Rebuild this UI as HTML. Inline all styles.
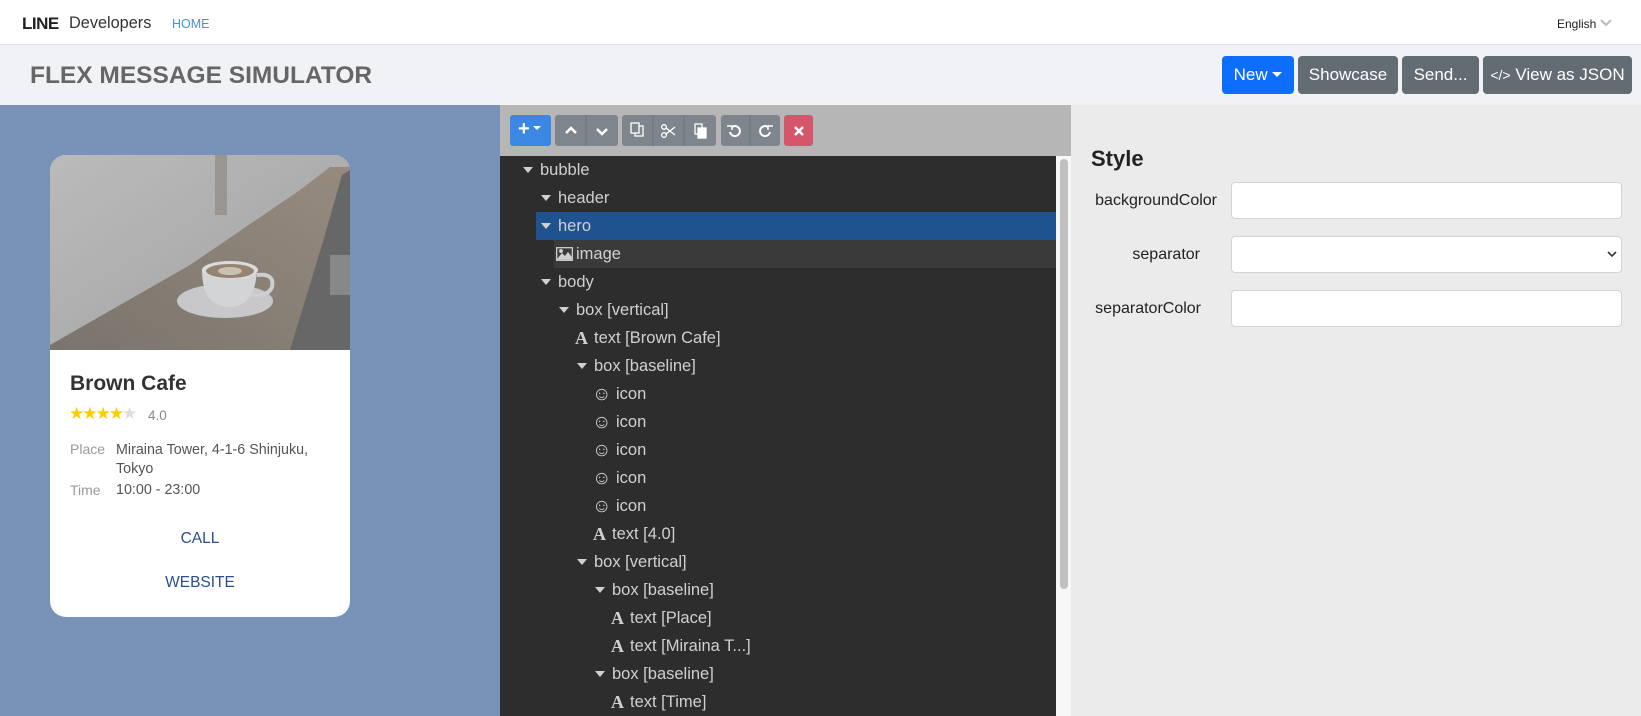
<!DOCTYPE html>
<html><head><meta charset="utf-8"><style>
*{box-sizing:border-box;margin:0;padding:0}
body{width:1641px;height:716px;overflow:hidden;font-family:"Liberation Sans",sans-serif;background:#fff;position:relative}
.abs{position:absolute}
#hdr{left:0;top:0;width:1641px;height:45px;background:#fff;border-bottom:1px solid #dde1e6}
#bar{left:0;top:45px;width:1641px;height:60px;background:#f1f2f6}
.btn{position:absolute;top:56px;height:38px;border-radius:4px;color:#fff;font-size:17px;line-height:38px;text-align:center;background:#636b73}
#left{left:0;top:105px;width:500px;height:611px;background:#7893b7}
#mid{left:500px;top:105px;width:571px;height:611px;background:#2d2d2d}
#tb{left:500px;top:105px;width:571px;height:51px;background:#b6b6b6}
#right{left:1071px;top:105px;width:570px;height:611px;background:#ebebeb}
.tbb{position:absolute;top:115px;height:31px;background:#7f858c;border-radius:3px}
.row{position:absolute;height:28px;line-height:28px;font-size:16.5px;color:#d0d0d0;white-space:nowrap}
.sm{font-size:19px;vertical-align:-1px}
.tri{position:absolute;width:0;height:0;border-left:5px solid transparent;border-right:5px solid transparent;border-top:6px solid #d0d0d0}
.A{position:absolute;font-family:"Liberation Serif",serif;font-weight:bold;font-size:18px;color:#d0d0d0}
.lbl{position:absolute;font-size:16px;color:#222;text-align:right}
.inp{position:absolute;left:1231px;width:391px;height:37px;background:#fff;border:1px solid #cfd4da;border-radius:4px}
</style></head><body>
<div id="hdr" class="abs"></div>
<div class="abs" style="left:22px;top:14px;font-size:17px;font-weight:bold;color:#222;letter-spacing:-0.5px">LINE</div>
<div class="abs" style="left:69px;top:14px;font-size:16.3px;color:#333">Developers</div>
<div class="abs" style="left:172px;top:17px;font-size:12.5px;color:#3d97d6">HOME</div>
<div class="abs" style="left:1557px;top:17px;font-size:12px;color:#222">English</div>
<svg class="abs" style="left:1600px;top:19px" width="12" height="8"><path d="M1 1 L6 6 L11 1" stroke="#bbb" stroke-width="2" fill="none"/></svg>
<div id="bar" class="abs"></div>
<div class="abs" style="left:30px;top:62px;font-size:24.5px;font-weight:bold;color:#666">FLEX MESSAGE SIMULATOR</div>
<div class="btn" style="left:1222px;width:72px;background:#0d6efd">New <span style="display:inline-block;border-left:5px solid transparent;border-right:5px solid transparent;border-top:5px solid #fff;vertical-align:3px"></span></div>
<div class="btn" style="left:1298px;width:100px">Showcase</div>
<div class="btn" style="left:1402px;width:77px">Send...</div>
<div class="btn" style="left:1483px;width:149px"><span style="font-size:14px">&lt;/&gt;</span> View as JSON</div>

<div id="left" class="abs"></div>
<div class="abs" style="left:50px;top:155px;width:300px;height:462px;background:#fff;border-radius:16px;overflow:hidden">
<svg width="300" height="195" viewBox="0 0 300 195">
<defs><linearGradient id="w" x1="0" y1="0" x2="1" y2="1"><stop offset="0" stop-color="#b8b8b8"/><stop offset="1" stop-color="#9a9a9a"/></linearGradient>
<linearGradient id="t" x1="0" y1="1" x2="1" y2="0"><stop offset="0" stop-color="#6a6259"/><stop offset="1" stop-color="#8c7e6e"/></linearGradient></defs>
<rect width="300" height="195" fill="url(#w)"/>
<rect x="165" y="0" width="12" height="60" fill="#8f8b85"/>
<polygon points="0,195 0,190 140,110 250,35 280,12 300,12 300,195" fill="url(#t)"/>
<polygon points="240,195 272,90 292,20 300,15 300,195" fill="#525254"/>
<rect x="280" y="100" width="20" height="40" fill="#7a7a7a"/>
<ellipse cx="175" cy="146" rx="48" ry="17" fill="#c8c9cc"/>
<path d="M152 115 Q152 152 180 152 Q205 152 207 115 Z" fill="#d6d7da"/>
<path d="M207 120 Q225 118 222 132 Q218 142 200 140" stroke="#cfd0d3" stroke-width="4" fill="none"/>
<ellipse cx="180" cy="115" rx="28" ry="9" fill="#e0e0e2"/>
<ellipse cx="180" cy="116" rx="24" ry="7" fill="#8b7660"/>
<ellipse cx="180" cy="116" rx="12" ry="4" fill="#cdbfae"/>
<rect width="300" height="195" fill="#c8c8c8" opacity="0.18"/>
</svg>
<div class="abs" style="left:20px;top:217px;font-size:21px;font-weight:bold;color:#333">Brown Cafe</div>
<div class="abs" style="left:19px;top:249px;font-size:17px;color:#fc0;letter-spacing:-2px">★★★★<span style="color:#ddd">★</span></div>
<div class="abs" style="left:98px;top:253px;font-size:13.5px;color:#888">4.0</div>
<div class="abs" style="left:20px;top:286px;font-size:14px;color:#999">Place</div>
<div class="abs" style="left:66px;top:286px;font-size:14.3px;color:#555;line-height:19px;width:230px">Miraina Tower, 4-1-6 Shinjuku, Tokyo</div>
<div class="abs" style="left:20px;top:327px;font-size:14px;color:#999">Time</div>
<div class="abs" style="left:66px;top:327px;font-size:14.3px;color:#555">10:00 - 23:00</div>
<div class="abs" style="left:0;width:300px;top:375px;text-align:center;font-size:15.5px;color:#2a4e8f">CALL</div>
<div class="abs" style="left:0;width:300px;top:419px;text-align:center;font-size:15.5px;color:#2a4e8f">WEBSITE</div>
</div>

<div id="mid" class="abs"></div>
<div id="tb" class="abs"></div>
<div class="tbb" style="left:510px;width:41px;background:#3a87e4;color:#fff;font-weight:bold;font-size:20px;line-height:29px;padding-left:8px">+<span style="display:inline-block;border-left:4px solid transparent;border-right:4px solid transparent;border-top:4px solid #fff;vertical-align:5px;margin-left:3px"></span></div>
<div class="tbb" style="left:555px;width:63px"></div>
<div class="tbb" style="left:622px;width:94px"></div>
<div class="tbb" style="left:721px;width:59px"></div>
<div class="tbb" style="left:784px;width:29px;background:#d5566a"></div>
<svg class="abs" style="left:500px;top:115px" width="320" height="31" fill="none" stroke="#fff" stroke-width="2.5">
<line x1="86" y1="0" x2="86" y2="31" stroke="#6e747a" stroke-width="1"/>
<line x1="153" y1="0" x2="153" y2="31" stroke="#6e747a" stroke-width="1"/>
<line x1="184" y1="0" x2="184" y2="31" stroke="#6e747a" stroke-width="1"/>
<line x1="250" y1="0" x2="250" y2="31" stroke="#6e747a" stroke-width="1"/>
<path d="M66 18 L71 13 L76 18"/><path d="M97 14 L102 19 L107 14"/>
<g stroke-width="1.3"><rect x="135" y="11" width="8" height="10"/><rect x="131" y="8" width="8" height="10" fill="#7f858c"/>
<circle cx="164" cy="12" r="2.3"/><circle cx="164" cy="20" r="2.3"/><path d="M166 13 L175 20 M166 19 L175 12"/>
<rect x="195" y="9" width="7" height="10"/><rect x="198" y="13" width="8" height="10" fill="#fff"/></g>
<path d="M232 12 A5 5 0 1 1 230 17" stroke-width="2"/><path d="M227 11 L232 11 L232 15" stroke-width="1.5"/>
<path d="M268 12 A5 5 0 1 0 270 17" stroke-width="2"/><path d="M273 11 L268 11 L268 15" stroke-width="1.5"/>
<path d="M295 12 L303 20 M303 12 L295 20"/>
</svg>
<div class="abs" style="left:536px;top:212px;width:520px;height:28px;background:#1f538f"></div>
<div class="abs" style="left:554px;top:240px;width:502px;height:28px;background:#3a3a3a"></div>
<div class="abs" style="left:1056px;top:156px;width:15px;height:560px;background:#f7f7f7"></div>
<div class="abs" style="left:1060px;top:159px;width:8px;height:430px;background:#c0c0c0;border-radius:4px"></div>

<div class="tri" style="left:523px;top:167px"></div><div class="row" style="left:540px;top:156px">bubble</div>
<div class="tri" style="left:541px;top:195px"></div><div class="row" style="left:558px;top:184px">header</div>
<div class="tri" style="left:541px;top:223px"></div><div class="row" style="left:558px;top:212px">hero</div>
<svg class="abs" style="left:556px;top:247px" width="17" height="14" fill="none" stroke="#d0d0d0" stroke-width="1.3"><rect x="0.7" y="0.7" width="15.6" height="12.6"/><path d="M2 12 L6 7 L9 10 L12 6 L15 10 L15 12 Z" fill="#d0d0d0"/><circle cx="5" cy="4" r="1.3" fill="#d0d0d0"/></svg>
<div class="row" style="left:576px;top:240px">image</div>
<div class="tri" style="left:541px;top:279px"></div><div class="row" style="left:558px;top:268px">body</div>
<div class="tri" style="left:559px;top:307px"></div><div class="row" style="left:576px;top:296px">box [vertical]</div>
<div class="A" style="left:575px;top:328px">A</div><div class="row" style="left:594px;top:324px">text [Brown Cafe]</div>
<div class="tri" style="left:577px;top:363px"></div><div class="row" style="left:594px;top:352px">box [baseline]</div>
<div class="row" style="left:592px;top:380px"><span class="sm">☺</span> icon</div>
<div class="row" style="left:592px;top:408px"><span class="sm">☺</span> icon</div>
<div class="row" style="left:592px;top:436px"><span class="sm">☺</span> icon</div>
<div class="row" style="left:592px;top:464px"><span class="sm">☺</span> icon</div>
<div class="row" style="left:592px;top:492px"><span class="sm">☺</span> icon</div>
<div class="A" style="left:593px;top:524px">A</div><div class="row" style="left:612px;top:520px">text [4.0]</div>
<div class="tri" style="left:577px;top:559px"></div><div class="row" style="left:594px;top:548px">box [vertical]</div>
<div class="tri" style="left:595px;top:587px"></div><div class="row" style="left:612px;top:576px">box [baseline]</div>
<div class="A" style="left:611px;top:608px">A</div><div class="row" style="left:630px;top:604px">text [Place]</div>
<div class="A" style="left:611px;top:636px">A</div><div class="row" style="left:630px;top:632px">text [Miraina T...]</div>
<div class="tri" style="left:595px;top:671px"></div><div class="row" style="left:612px;top:660px">box [baseline]</div>
<div class="A" style="left:611px;top:692px">A</div><div class="row" style="left:630px;top:688px">text [Time]</div>

<div id="right" class="abs"></div>
<div class="abs" style="left:1091px;top:146px;font-size:22px;font-weight:bold;color:#222">Style</div>
<div class="lbl" style="left:1060px;width:157px;top:192px">backgroundColor</div>
<div class="lbl" style="left:1060px;width:140px;top:246px">separator</div>
<div class="lbl" style="left:1060px;width:141px;top:300px">separatorColor</div>
<div class="inp" style="top:182px"></div>
<div class="inp" style="top:236px"></div>
<svg class="abs" style="left:1607px;top:251px" width="10" height="7"><path d="M1 1 L5 5 L9 1" stroke="#333" stroke-width="1.6" fill="none"/></svg>
<div class="inp" style="top:290px"></div>
</body></html>
